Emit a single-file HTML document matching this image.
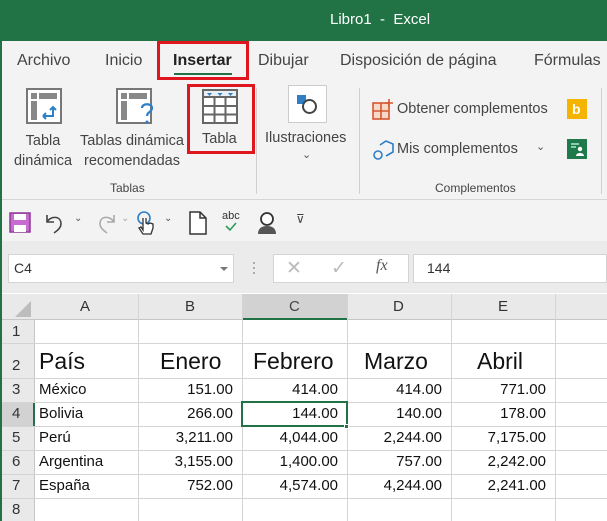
<!DOCTYPE html>
<html><head><meta charset="utf-8"><style>
*{box-sizing:border-box;margin:0;padding:0}
body{width:607px;height:521px;overflow:hidden;position:relative;background:#fff;font-family:"Liberation Sans","DejaVu Sans",sans-serif;color:#333}
.a{position:absolute}
.t{white-space:nowrap}
.cell{position:absolute;font-size:15px;color:#111;white-space:nowrap}
.r{text-align:right}
</style></head><body>
<div class="a" style="left:0;top:0;width:607px;height:41px;background:#217346"></div>
<div class="a t" style="left:330px;top:11px;color:#fff;font-size:15px">Libro1&nbsp; - &nbsp;Excel</div>
<div class="a" style="left:0;top:41px;width:607px;height:200px;background:#f3f3f3"></div>
<div class="a" style="left:0;top:41px;width:2px;height:480px;background:#217346"></div>
<!-- tabs -->
<div class="a t" style="left:17px;top:52px;font-size:16px;color:#444">Archivo</div>
<div class="a t" style="left:105px;top:52px;font-size:16px;color:#444">Inicio</div>
<div class="a t" style="left:173px;top:52px;font-size:16px;color:#222;font-weight:bold">Insertar</div>
<div class="a" style="left:174px;top:73px;width:58px;height:2px;background:#217346"></div>
<div class="a" style="left:157px;top:41px;width:92px;height:39px;border:3px solid #e0161f"></div>
<div class="a t" style="left:258px;top:52px;font-size:16px;color:#444">Dibujar</div>
<div class="a t" style="left:340px;top:52px;font-size:16px;color:#444">Disposición de página</div>
<div class="a t" style="left:534px;top:52px;font-size:16px;color:#444">Fórmulas</div>
<!-- tablas group -->
<svg class="a" style="left:26px;top:88px" width="36" height="36" viewBox="0 0 36 36"><rect x="1" y="1" width="34" height="34" fill="#fff" stroke="#777" stroke-width="2"/><rect x="5" y="5" width="6" height="6" fill="#888"/><rect x="13" y="5" width="18" height="6" fill="#888"/><rect x="5" y="13" width="6" height="19" fill="#888"/><path d="M17 28h10v-9M24 22l3-3 3 3M17 28l3-3M17 28l3 3" stroke="#2e7fc6" stroke-width="2" fill="none"/></svg>
<svg class="a" style="left:116px;top:88px" width="42" height="38" viewBox="0 0 42 38"><rect x="1" y="1" width="34" height="34" fill="#fff" stroke="#777" stroke-width="2"/><rect x="5" y="5" width="6" height="6" fill="#888"/><rect x="13" y="5" width="18" height="6" fill="#888"/><rect x="5" y="13" width="6" height="19" fill="#888"/><path d="M26 20c0-5 10-5 10 0c0 4-5 4-5 8" stroke="#2e7fc6" stroke-width="2.2" fill="none"/><circle cx="31" cy="34" r="1.5" fill="#2e7fc6"/></svg>
<div class="a t" style="left:8px;top:131px;width:70px;text-align:center;font-size:14.5px;line-height:20px;color:#444">Tabla<br>dinámica</div>
<div class="a t" style="left:77px;top:131px;width:110px;text-align:center;font-size:14.5px;line-height:20px;color:#444">Tablas dinámica<br>recomendadas</div>
<svg class="a" style="left:202px;top:89px" width="36" height="35" viewBox="0 0 36 35"><rect x="1" y="1" width="34" height="33" fill="#fff" stroke="#666" stroke-width="2"/><rect x="1" y="1" width="34" height="7" fill="#e8eef5" stroke="#666" stroke-width="2"/><path d="M5 4h5l-2.5 3zM15.5 4h5l-2.5 3zM26 4h5l-2.5 3z" fill="#2e7fc6"/><path d="M12.5 8v26M23.5 8v26M1 17h34M1 25.5h34" stroke="#666" stroke-width="2"/></svg>
<div class="a t" style="left:202px;top:131px;font-size:14.5px;color:#444">Tabla</div>
<div class="a" style="left:187px;top:84px;width:68px;height:70px;border:3px solid #e0161f"></div>
<div class="a t" style="left:110px;top:181px;font-size:12px;color:#444">Tablas</div>
<div class="a" style="left:256px;top:88px;width:1px;height:106px;background:#d0d0d0"></div>
<!-- ilustraciones -->
<div class="a" style="left:288px;top:85px;width:39px;height:38px;background:#fff;border:1px solid #ccc"></div>
<div class="a" style="left:297px;top:95px;width:9px;height:9px;background:#2e7fc6"></div>
<div class="a" style="left:302px;top:99px;width:15px;height:15px;border:2px solid #444;border-radius:50%;background:#fff"></div>
<div class="a t" style="left:265px;top:130px;font-size:14.5px;color:#444">Ilustraciones</div>
<div class="a t" style="left:302px;top:148px;font-size:11px;color:#555">⌄</div>
<div class="a" style="left:359px;top:88px;width:1px;height:106px;background:#d0d0d0"></div>
<!-- complementos -->
<svg class="a" style="left:372px;top:98px" width="22" height="22" viewBox="0 0 22 22"><rect x="1" y="5" width="16" height="16" fill="#f7d9c8" stroke="#d65532" stroke-width="1.6"/><path d="M9 5v16M1 13h16" stroke="#d65532" stroke-width="1.6"/><path d="M17 1v8M13 5h8" stroke="#d65532" stroke-width="1.6"/></svg>
<div class="a t" style="left:397px;top:101px;font-size:14.5px;color:#444">Obtener complementos</div>
<div class="a" style="left:567px;top:99px;width:20px;height:20px;background:#f5b400"></div>
<div class="a t" style="left:572px;top:101px;font-size:14px;color:#fff;font-weight:bold">b</div>
<svg class="a" style="left:372px;top:139px" width="24" height="22" viewBox="0 0 24 22"><path d="M8 6l6-4 7 3v8l-7 4" fill="none" stroke="#2e7fc6" stroke-width="1.6"/><circle cx="6" cy="16" r="4" fill="none" stroke="#2e7fc6" stroke-width="1.6"/></svg>
<div class="a t" style="left:397px;top:141px;font-size:14.5px;color:#444">Mis complementos</div>
<div class="a t" style="left:536px;top:140px;font-size:11px;color:#555">⌄</div>
<div class="a" style="left:567px;top:139px;width:20px;height:20px;background:#1e7a4a"></div>
<svg class="a" style="left:567px;top:139px" width="20" height="20" viewBox="0 0 20 20"><path d="M4 5h8M4 8h5" stroke="#cfe" stroke-width="1.3"/><circle cx="13" cy="10" r="2.2" fill="#fff"/><path d="M9 17c0-4 8-4 8 0z" fill="#fff"/></svg>
<div class="a t" style="left:435px;top:181px;font-size:12px;color:#444">Complementos</div>
<div class="a" style="left:601px;top:88px;width:1px;height:106px;background:#d0d0d0"></div>
<div class="a" style="left:2px;top:199px;width:605px;height:1px;background:#d6d6d6"></div>
<!-- QAT -->
<svg class="a" style="left:9px;top:212px" width="22" height="21" viewBox="0 0 22 21"><rect x="1" y="1" width="20" height="19" fill="#c86bd0" stroke="#8e3a96" stroke-width="1.5"/><rect x="5" y="2" width="12" height="6" fill="#fff"/><rect x="5" y="13" width="12" height="7" fill="#fff"/></svg>
<svg class="a" style="left:44px;top:212px" width="24" height="22" viewBox="0 0 24 22"><path d="M3 3v7h7M3 10c3-6 14-7 14 2c0 4-4 7-7 9" fill="none" stroke="#444" stroke-width="1.6"/></svg>
<div class="a t" style="left:74px;top:213px;font-size:10px;color:#555">⌄</div>
<svg class="a" style="left:93px;top:212px" width="24" height="22" viewBox="0 0 24 22"><path d="M21 3v7h-7M21 10c-3-6-14-7-14 2c0 4 4 7 7 9" fill="none" stroke="#aaa" stroke-width="1.6"/></svg>
<div class="a t" style="left:121px;top:213px;font-size:10px;color:#aaa">⌄</div>
<svg class="a" style="left:136px;top:210px" width="20" height="26" viewBox="0 0 20 26"><circle cx="8" cy="8" r="6" fill="none" stroke="#2e7fc6" stroke-width="1.6"/><path d="M7 8v12l-2-3-2 1 4 6h8l2-6v-4l-3-1-2 1-2-1v-5" fill="#fff" stroke="#333" stroke-width="1.3"/></svg>
<div class="a t" style="left:164px;top:213px;font-size:10px;color:#555">⌄</div>
<svg class="a" style="left:189px;top:211px" width="18" height="24" viewBox="0 0 18 24"><path d="M1 1h10l6 6v16H1z M11 1v6h6" fill="#fff" stroke="#333" stroke-width="1.5"/></svg>
<div class="a t" style="left:222px;top:210px;font-size:11px;color:#333">abc</div>
<svg class="a" style="left:224px;top:222px" width="14" height="10" viewBox="0 0 14 10"><path d="M2 4l4 4 6-7" fill="none" stroke="#2a9d5c" stroke-width="1.6"/></svg>
<svg class="a" style="left:256px;top:211px" width="22" height="24" viewBox="0 0 22 24"><circle cx="11" cy="8" r="6" fill="#fff" stroke="#333" stroke-width="1.8"/><path d="M2 23c0-6 4-8 9-8s9 2 9 8z" fill="#555"/></svg>
<div class="a t" style="left:296px;top:212px;font-size:12px;color:#444">⊽</div>
<!-- formula bar -->
<div class="a" style="left:2px;top:241px;width:605px;height:52px;background:#ebebeb"></div>
<div class="a" style="left:8px;top:254px;width:226px;height:29px;background:#fff;border:1px solid #d4d4d4"></div>
<div class="a t" style="left:14px;top:260px;font-size:14px;color:#333">C4</div>
<div class="a" style="left:220px;top:267px;border-left:4px solid transparent;border-right:4px solid transparent;border-top:4px solid #777"></div>
<div class="a" style="left:253px;top:262px;width:2px;height:2px;background:#aaa;box-shadow:0 5px #aaa,0 10px #aaa"></div>
<div class="a" style="left:273px;top:254px;width:136px;height:29px;background:#fff;border:1px solid #d4d4d4"></div>
<div class="a t" style="left:286px;top:257px;font-size:19px;color:#bbb">✕</div>
<div class="a t" style="left:331px;top:257px;font-size:19px;color:#bbb">✓</div>
<div class="a t" style="left:376px;top:257px;font-size:16px;color:#555;font-family:'Liberation Serif',serif;font-style:italic">fx</div>
<div class="a" style="left:413px;top:254px;width:194px;height:29px;background:#fff;border:1px solid #d4d4d4"></div>
<div class="a t" style="left:427px;top:260px;font-size:14px;color:#333">144</div>
<!-- headers -->
<div class="a" style="left:2px;top:294px;width:605px;height:26px;background:#e9e9e9;border-bottom:1px solid #c6c6c6"></div>
<svg class="a" style="left:14px;top:300px" width="18" height="18"><path d="M17 1V17H1z" fill="#bdbdbd"/></svg>
<div class="a" style="left:242px;top:294px;width:105px;height:26px;background:#d2d2d2;border-bottom:2px solid #217346"></div>
<div class="a" style="left:2px;top:320px;width:33px;height:201px;background:#e9e9e9;border-right:1px solid #c6c6c6"></div>
<div class="a" style="left:2px;top:402px;width:33px;height:24px;background:#d2d2d2;border-right:2px solid #217346"></div>
<div style="position:absolute;left:0;top:294px;font-size:15px;color:#333">
<div class="a" style="left:80px;top:4px">A</div><div class="a" style="left:185px;top:4px">B</div><div class="a" style="left:289px;top:4px;color:#444">C</div><div class="a" style="left:393px;top:4px">D</div><div class="a" style="left:498px;top:4px">E</div>
</div>
<!-- grid lines -->
<div class="a" style="left:138px;top:294px;width:1px;height:227px;background:#d4d4d4"></div>
<div class="a" style="left:242px;top:294px;width:1px;height:227px;background:#d4d4d4"></div>
<div class="a" style="left:347px;top:294px;width:1px;height:227px;background:#d4d4d4"></div>
<div class="a" style="left:451px;top:294px;width:1px;height:227px;background:#d4d4d4"></div>
<div class="a" style="left:555px;top:294px;width:1px;height:227px;background:#d4d4d4"></div>
<div class="a" style="left:2px;top:343px;width:605px;height:1px;background:#d4d4d4"></div>
<div class="a" style="left:2px;top:378px;width:605px;height:1px;background:#d4d4d4"></div>
<div class="a" style="left:2px;top:402px;width:605px;height:1px;background:#d4d4d4"></div>
<div class="a" style="left:2px;top:426px;width:605px;height:1px;background:#d4d4d4"></div>
<div class="a" style="left:2px;top:450px;width:605px;height:1px;background:#d4d4d4"></div>
<div class="a" style="left:2px;top:474px;width:605px;height:1px;background:#d4d4d4"></div>
<div class="a" style="left:2px;top:498px;width:605px;height:1px;background:#d4d4d4"></div>
<!-- row numbers -->
<div style="position:absolute;left:12px;top:0;font-size:15px;color:#333">
<div class="a" style="top:323px">1</div><div class="a" style="top:357px">2</div><div class="a" style="top:381px">3</div><div class="a" style="top:405px">4</div><div class="a" style="top:429px">5</div><div class="a" style="top:453px">6</div><div class="a" style="top:477px">7</div><div class="a" style="top:501px">8</div>
</div>
<!-- row 2 headers -->
<div class="cell" style="left:39px;top:348px;font-size:23px">País</div>
<div class="cell" style="left:160px;top:348px;font-size:23px">Enero</div>
<div class="cell" style="left:253px;top:348px;font-size:23px">Febrero</div>
<div class="cell" style="left:364px;top:348px;font-size:23px">Marzo</div>
<div class="cell" style="left:477px;top:348px;font-size:23px">Abril</div>
<!-- data -->
<div class="cell" style="left:39px;top:381px">México</div>
<div class="cell" style="left:39px;top:405px">Bolivia</div>
<div class="cell" style="left:39px;top:429px">Perú</div>
<div class="cell" style="left:39px;top:453px">Argentina</div>
<div class="cell" style="left:39px;top:477px">España</div>
<div style="position:absolute;left:0;top:0">
<div class="cell r" style="left:139px;width:94px;top:381px">151.00</div>
<div class="cell r" style="left:139px;width:94px;top:405px">266.00</div>
<div class="cell r" style="left:139px;width:94px;top:429px">3,211.00</div>
<div class="cell r" style="left:139px;width:94px;top:453px">3,155.00</div>
<div class="cell r" style="left:139px;width:94px;top:477px">752.00</div>
<div class="cell r" style="left:243px;width:95px;top:381px">414.00</div>
<div class="cell r" style="left:243px;width:95px;top:405px">144.00</div>
<div class="cell r" style="left:243px;width:95px;top:429px">4,044.00</div>
<div class="cell r" style="left:243px;width:95px;top:453px">1,400.00</div>
<div class="cell r" style="left:243px;width:95px;top:477px">4,574.00</div>
<div class="cell r" style="left:348px;width:94px;top:381px">414.00</div>
<div class="cell r" style="left:348px;width:94px;top:405px">140.00</div>
<div class="cell r" style="left:348px;width:94px;top:429px">2,244.00</div>
<div class="cell r" style="left:348px;width:94px;top:453px">757.00</div>
<div class="cell r" style="left:348px;width:94px;top:477px">4,244.00</div>
<div class="cell r" style="left:452px;width:94px;top:381px">771.00</div>
<div class="cell r" style="left:452px;width:94px;top:405px">178.00</div>
<div class="cell r" style="left:452px;width:94px;top:429px">7,175.00</div>
<div class="cell r" style="left:452px;width:94px;top:453px">2,242.00</div>
<div class="cell r" style="left:452px;width:94px;top:477px">2,241.00</div>
</div>
<div class="a" style="left:241px;top:401px;width:107px;height:26px;border:2px solid #217346"></div>
<div class="a" style="left:344px;top:424px;width:5px;height:5px;background:#217346;border:1px solid #fff"></div>
</body></html>
